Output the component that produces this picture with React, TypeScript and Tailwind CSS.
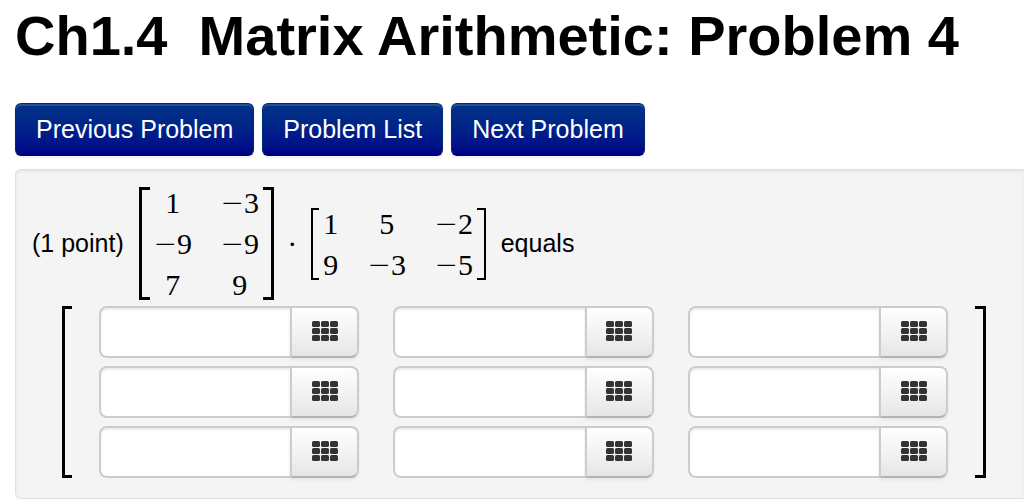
import React from "react";

const links = ["Previous Problem", "Problem List", "Next Problem"];

const left = [
  [1, -3],
  [-9, -9],
  [7, 9],
];

const right = [
  [1, 5, -2],
  [9, -3, -5],
];

function Num({ value }: { value: number }) {
  return (
    <span className="flex h-[41px] items-center justify-center font-['Liberation_Serif',serif] text-[30px] leading-[41px]">
      {value < 0 && (
        <span className="font-['DejaVu_Sans',sans-serif] text-[28px] font-extralight">
          −
        </span>
      )}
      {Math.abs(value)}
    </span>
  );
}

function KeypadIcon() {
  return (
    <svg width="26" height="20" viewBox="0 0 26 20" fill="#333" aria-hidden="true">
      {[0, 7, 14].map((y) =>
        [0, 9, 18].map((x) => (
          <rect key={`${x}-${y}`} x={x} y={y} width="8" height="6" rx="1.6" />
        ))
      )}
    </svg>
  );
}

function AnswerBox({ label }: { label: string }) {
  return (
    <div className="flex h-[52px] min-w-0">
      <input
        type="text"
        aria-label={label}
        className="min-w-0 flex-1 rounded-l-lg border-2 border-r-0 border-[#ccc] bg-white px-3 text-[25px] shadow-[inset_0_2px_2px_rgba(0,0,0,0.075)] focus:outline-none"
      />
      <button
        type="button"
        aria-label={`Open equation editor for ${label}`}
        className="flex w-[69px] justify-center rounded-r-lg border-2 border-[#ccc] border-b-[#b3b3b3] bg-linear-to-b from-white to-[#e6e6e6] pt-[13px] shadow-[0_2px_3px_rgba(0,0,0,0.06)]"
      >
        <KeypadIcon />
      </button>
    </div>
  );
}

export default function App() {
  return (
    <main className="overflow-hidden bg-white pl-[15px] font-['Liberation_Sans',Arial,sans-serif] text-[25px] text-black">
      <h1 className="mb-[31px] text-[56px] leading-[72px] font-bold">
        Ch1.4&nbsp; Matrix Arithmetic: Problem 4
      </h1>
      <nav className="mb-[13px] flex gap-2">
        {links.map((name) => (
          <a
            key={name}
            href="#"
            className="h-[53px] rounded-md border border-[#002a73] border-b-[#00005c] bg-linear-to-b from-[#003388] to-[#000088] px-5 leading-[51px] whitespace-nowrap text-white shadow-[inset_0_2px_0_rgba(255,255,255,0.15),0_2px_3px_rgba(0,0,0,0.06)]"
          >
            {name}
          </a>
        ))}
      </nav>
      <section className="rounded-l-md border border-r-0 border-[#e0e0e0] bg-[#f4f4f4] pt-[17px] pr-[38px] pb-5 pl-4 shadow-[inset_0_2px_3px_rgba(0,0,0,0.06)]">
        <div className="flex items-center">
          <span className="mr-[15px]">(1 point)</span>
          <div className="flex h-[113px]">
            <span className="w-[11px] border-[3px] border-r-0 border-black" />
            <div className="grid grid-cols-[46px_46px] content-center gap-x-[21px]">
              {left.flat().map((n, i) => (
                <Num key={i} value={n} />
              ))}
            </div>
            <span className="w-[11px] border-[3px] border-l-0 border-black" />
          </div>
          <span className="w-[37px] text-center font-['Liberation_Serif',serif] text-[30px]">
            ·
          </span>
          <div className="flex h-[72px]">
            <span className="w-[8px] border-2 border-r-0 border-black" />
            <div className="grid grid-cols-[24px_88px_46px] content-center">
              {right.flat().map((n, i) => (
                <Num key={i} value={n} />
              ))}
            </div>
            <span className="w-[9px] border-2 border-l-0 border-black" />
          </div>
          <span className="ml-[15px]">equals</span>
        </div>
        <div className="mt-[6px] ml-[30px] flex">
          <span className="w-[10px] border-[3px] border-r-0 border-black" />
          <div className="mx-[27px] grid flex-1 grid-cols-3 gap-x-[34px] gap-y-2">
            {[1, 2, 3].map((row) =>
              [1, 2, 3].map((col) => (
                <AnswerBox key={`${row}-${col}`} label={`row ${row} column ${col}`} />
              ))
            )}
          </div>
          <span className="w-[11px] border-[3px] border-l-0 border-black" />
        </div>
      </section>
    </main>
  );
}
